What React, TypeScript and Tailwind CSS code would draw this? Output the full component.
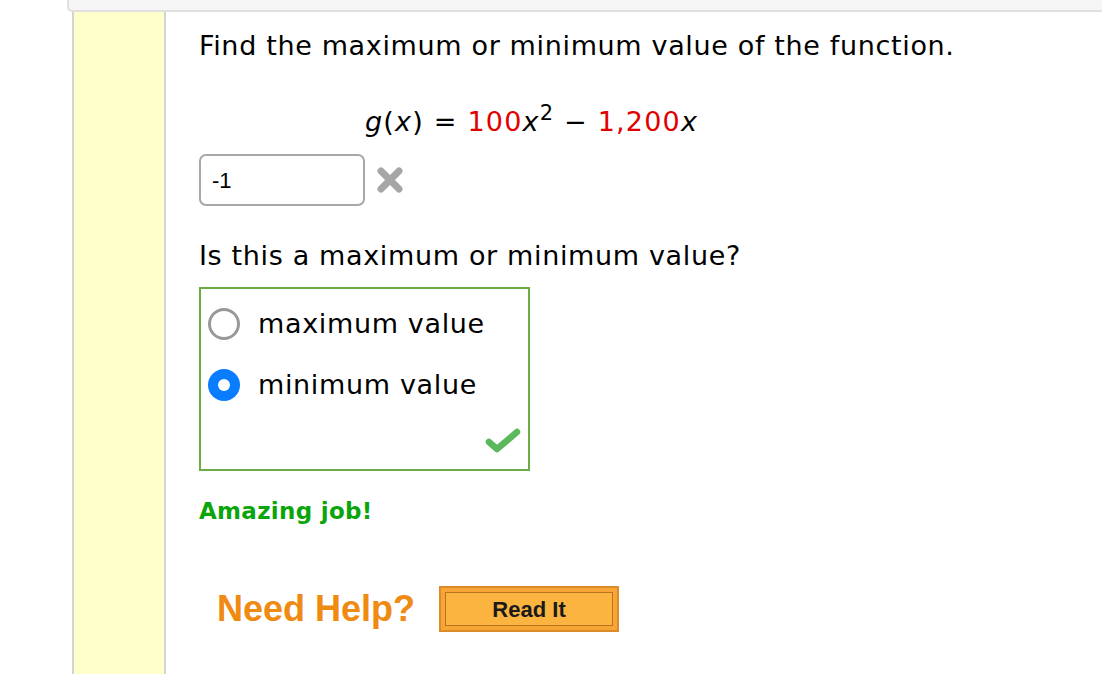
import React from "react";

function CrossIcon() {
  return (
    <svg width="32" height="32" viewBox="0 0 32 32">
      <path d="M7 7 L25 25 M25 7 L7 25" stroke="#a6a6a6" strokeWidth="7" strokeLinecap="round" />
    </svg>
  );
}

function CheckIcon() {
  return (
    <svg width="38" height="28" viewBox="0 0 38 28">
      <path d="M5 15 L13 22 L33 5" fill="none" stroke="#5cb85c" strokeWidth="6.5" strokeLinecap="round" strokeLinejoin="round" />
    </svg>
  );
}

function Radio({ checked }: { checked: boolean }) {
  if (checked) {
    return (
      <span className="flex h-[32px] w-[32px] items-center justify-center rounded-full bg-[#0a7cff]">
        <span className="h-[12px] w-[12px] rounded-full bg-white" />
      </span>
    );
  }
  return <span className="block h-[32px] w-[32px] rounded-full border-[3px] border-[#999999] bg-white" />;
}

export default function App() {
  const verdana = { fontFamily: '"DejaVu Sans", Verdana, sans-serif' };
  const arial = { fontFamily: '"Liberation Sans", Arial, sans-serif' };
  return (
    <div className="relative h-[674px] w-full overflow-hidden bg-white text-black" style={verdana}>
      {/* top strip */}
      <div className="ml-[67px] h-[12px] rounded-bl-[5px] border-b-2 border-l-2 border-[#e0e0e0] bg-[#f5f5f5]" />

      <div className="flex h-[662px] pl-[72px]">
        {/* yellow margin column */}
        <div className="h-full w-[94px] border-x-2 border-[#d4d4d4] bg-[#ffffcc]" />

        {/* question */}
        <div className="flex flex-col pl-[33px] tracking-[0.65px]">
          <p className="mt-[17px] text-[27px] leading-[34px]">Find the maximum or minimum value of the function.</p>

          <p className="mt-[42px] pl-[166px] text-[27px] leading-[34px] tracking-[1.2px]">
            <span className="italic">g</span>(<span className="italic">x</span>) ={" "}
            <span className="text-[#e00000]">100</span>
            <span className="italic">x</span>
            <sup className="relative -top-[11px] text-[21px]">2</sup> −{" "}
            <span className="text-[#e00000]">1,200</span>
            <span className="italic">x</span>
          </p>

          <div className="mt-[15px] flex items-center gap-[9px] tracking-normal">
            <div className="flex h-[52px] w-[166px] items-center rounded-[7px] border-2 border-[#a8a8a8] px-[11px] text-[22px]" style={arial}>
              -1
            </div>
            <CrossIcon />
          </div>

          <p className="mt-[33px] text-[27px] leading-[34px]">Is this a maximum or minimum value?</p>

          <div className="mt-[14px] flex h-[184px] w-[331px] flex-col border-2 border-[#6aac45] pl-[7px] pt-[18px]">
            <label className="flex items-center gap-[18px] text-[27px] leading-[34px]">
              <Radio checked={false} />
              maximum value
            </label>
            <label className="mt-[27px] flex items-center gap-[18px] text-[27px] leading-[34px]">
              <Radio checked={true} />
              minimum value
            </label>
            <div className="mt-auto mb-[14px] flex justify-end pr-[6px]">
              <CheckIcon />
            </div>
          </div>

          <p className="mt-[26px] text-[23px] font-bold leading-[28px] tracking-[0.3px] text-[#0aa50a]">Amazing job!</p>

          <div className="mt-[61px] flex items-center gap-[24px] pl-[18px] tracking-normal">
            <span className="text-[36px] font-bold leading-[40px] text-[#ef8a12]" style={arial}>
              Need Help?
            </span>
            <button className="flex h-[46px] w-[180px] items-center justify-center border-2 border-[#dc8a2a] bg-[#f7a534] p-[4px]" style={arial}>
              <span className="flex h-full w-full items-center justify-center border border-[#b8741e] bg-[#fbb440] text-[22px] font-bold text-[#1a1a1a]">
                Read It
              </span>
            </button>
          </div>
        </div>
      </div>
    </div>
  );
}
